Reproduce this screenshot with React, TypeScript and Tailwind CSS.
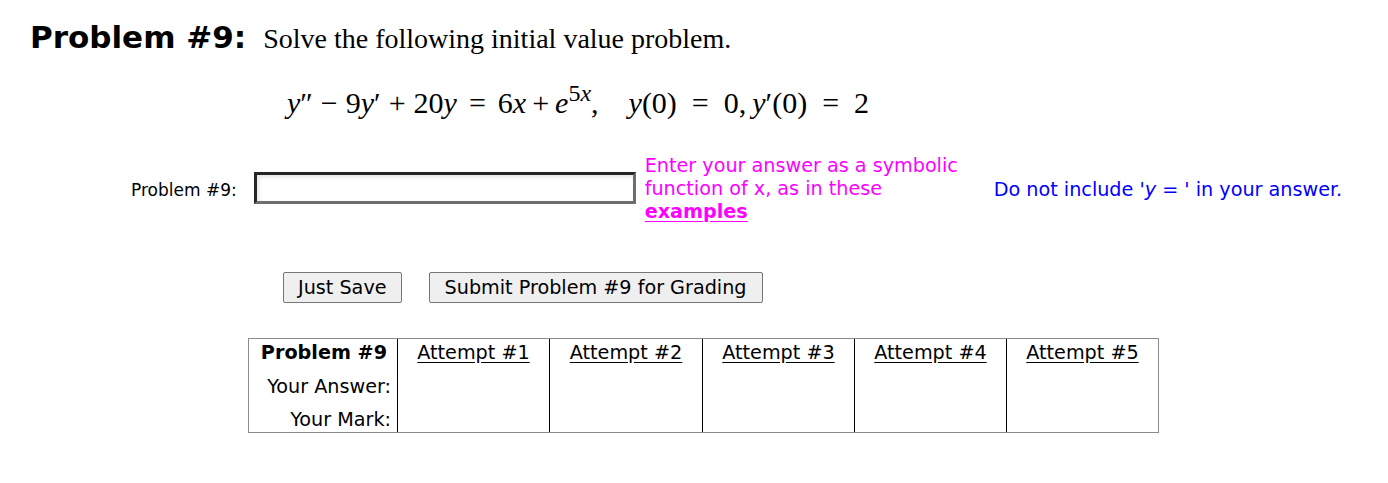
import React from "react";

const sans = { fontFamily: '"DejaVu Sans", Verdana, sans-serif' };
const serif = { fontFamily: '"Liberation Serif", "Times New Roman", serif' };

function Col({
  head,
  first,
  className,
}: {
  head: string;
  first?: boolean;
  className: string;
}) {
  return (
    <div className={`flex flex-col ${className}`}>
      <div className={`h-[30px] pt-[3px] leading-[22px] ${first ? "text-right pr-[10px] font-bold" : "text-center"}`}>
        {first ? head : <span className="underline underline-offset-[3px]">{head}</span>}
      </div>
      <div className={`h-[34px] pt-[7px] leading-[22px] ${first ? "text-right pr-[6px]" : ""}`}>
        {first ? "Your Answer:" : ""}
      </div>
      <div className={`h-[29px] pt-[6px] leading-[22px] ${first ? "text-right pr-[6px]" : ""}`}>
        {first ? "Your Mark:" : ""}
      </div>
    </div>
  );
}

export default function App() {
  return (
    <div className="w-[1388px] h-[483px] bg-white text-black overflow-hidden" style={sans}>
      {/* Heading */}
      <div className="flex items-baseline pl-[30px] pt-[19px]">
        <span className="text-[31px] leading-[36px] font-bold" style={sans}>
          Problem #9:
        </span>
        <span className="ml-[17px] text-[28px] leading-[36px]" style={serif}>
          Solve the following initial value problem.
        </span>
      </div>

      {/* Equation */}
      <div className="pl-[287px] mt-[28px] text-[30px] leading-[36px] whitespace-nowrap" style={serif}>
        <i>y</i>″<span className="mx-[8px]">−</span>9<i>y</i>′<span className="mx-[8px]">+</span>20<i>y</i>
        <span className="mx-[12px]">=</span>6<i>x</i>
        <span className="mx-[6px]">+</span>
        <i>e</i>
        <sup className="text-[24px] relative -top-[12px]" style={serif}>
          5<i>x</i>
        </sup>
        ,<span className="inline-block w-[30px]"></span>
        <i>y</i>(0)<span className="mx-[15px]">=</span>0,<span className="inline-block w-[6px]"></span>
        <i>y</i>′(0)<span className="mx-[15px]">=</span>2
      </div>

      {/* Answer row */}
      <div className="flex items-center mt-[32px] h-[69px]">
        <span className="ml-[131px] text-[17px] leading-[22px] mt-[5px]">Problem #9:</span>
        <div className="ml-[17px] w-[382px] h-[32px] border-[3px] border-t-[#262626] border-l-[#262626] border-b-[#6e6e6e] border-r-[#6e6e6e] bg-white shadow-[inset_2px_2px_4px_rgba(0,0,0,0.10)]" />
        <div className="ml-[9px] w-[349px] text-[19.2px] leading-[23px] text-[#ff00ff] mt-[2px]">
          Enter your answer as a symbolic
          <br />
          function of x, as in these
          <br />
          <span className="font-bold underline underline-offset-[3px]">examples</span>
        </div>
        <div className="text-[19.2px] leading-[23px] text-[#0000ff] mt-[4px]">
          Do not include '<i>y</i> = ' in your answer.
        </div>
      </div>

      {/* Buttons */}
      <div className="flex mt-[50px] pl-[283px] gap-[27px]">
        <button
          className="h-[31px] px-[14px] text-[19.2px] leading-[22px] bg-[#efefef] border border-[#767676] rounded-[2px]"
          style={sans}
        >
          Just Save
        </button>
        <button
          className="h-[31px] px-[15px] text-[19.2px] leading-[22px] bg-[#efefef] border border-[#767676] rounded-[2px]"
          style={sans}
        >
          Submit Problem #9 for Grading
        </button>
      </div>

      {/* Table */}
      <div className="ml-[248px] mt-[35px] w-[911px] h-[95px] border border-[#8a8a8a] flex text-[19.2px]">
        <Col head="Problem #9" first className="w-[148px]" />
        <Col head="Attempt #1" className="w-[152px] border-l border-black" />
        <Col head="Attempt #2" className="w-[153px] border-l border-black" />
        <Col head="Attempt #3" className="w-[152px] border-l border-black" />
        <Col head="Attempt #4" className="w-[152px] border-l border-black" />
        <Col head="Attempt #5" className="flex-1 border-l border-black" />
      </div>
    </div>
  );
}
